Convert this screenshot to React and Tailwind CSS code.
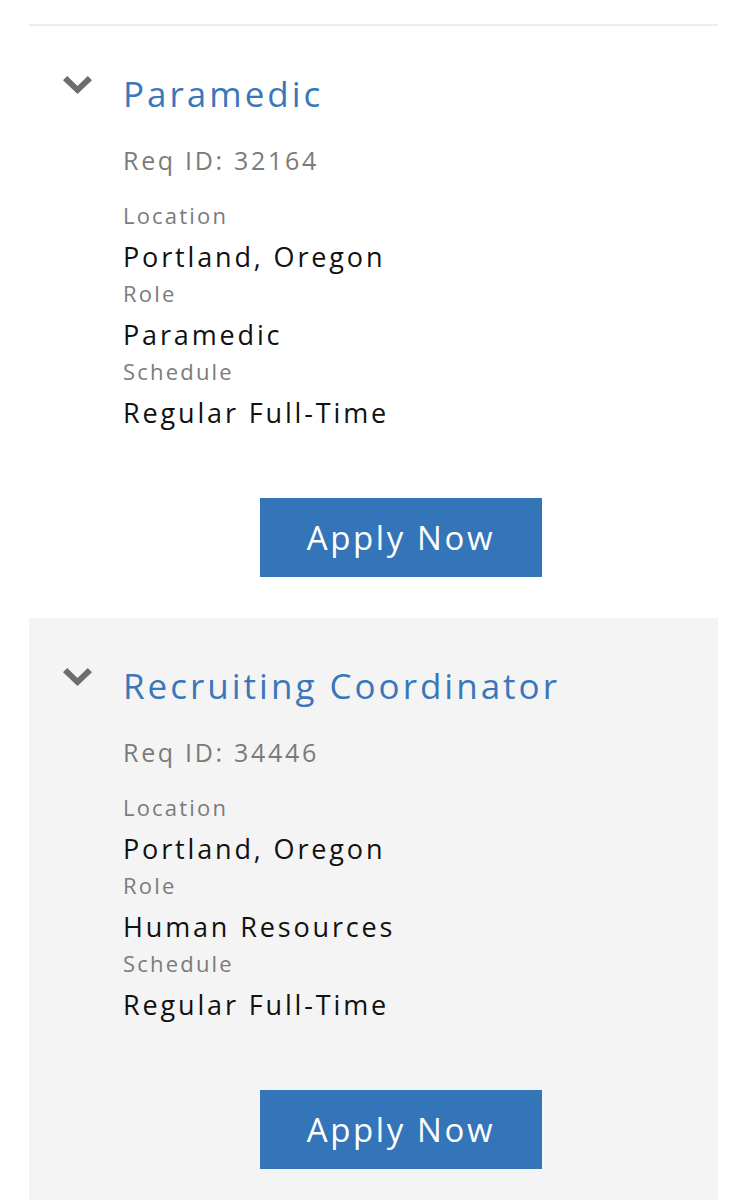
import React from "react";

const font = { fontFamily: '"Open Sans", "Liberation Sans", sans-serif' };

function Chevron() {
  return (
    <svg width="29" height="18" viewBox="0 0 29 18" className="block">
      <polygon points="0,4.2 4.2,0 14.5,10 24.8,0 29,4.2 14.5,18" fill="#6d6d6d" />
    </svg>
  );
}

function Field({ label, value }) {
  return (
    <>
      <div className="text-[22px] leading-[32px] tracking-[2.2px] text-[#7b7b7b]">{label}</div>
      <div className="mt-[6px] text-[27px] leading-[40px] tracking-[2.85px] text-[#111111]">{value}</div>
    </>
  );
}

function Job({ title, req, location, role, schedule, bg }) {
  return (
    <div className={`flex ${bg} pt-[46px] pb-[41px]`}>
      <div className="w-[94px] shrink-0 pl-[34px] pt-[4px]">
        <Chevron />
      </div>
      <div className="flex-1 pr-[39px]">
        <div className="text-[35px] leading-[44px] tracking-[3px] text-[#3a77ba]">{title}</div>
        <div className="mt-[27px] text-[25px] leading-[34px] tracking-[2.7px] text-[#7b7b7b]">Req ID: {req}</div>
        <div className="mt-[22px]">
          <Field label="Location" value={location} />
          <Field label="Role" value={role} />
          <Field label="Schedule" value={schedule} />
        </div>
        <div className="mt-[65px] flex justify-center">
          <button className="w-[282px] h-[79px] bg-[#3474b8] text-white text-[33px] tracking-[2.6px] flex items-center justify-center">
            Apply Now
          </button>
        </div>
      </div>
    </div>
  );
}

export default function App() {
  return (
    <div className="w-[747px] h-[1200px] overflow-hidden bg-white" style={font}>
      <div className="px-[29px] pt-[24px]">
        <div className="h-[2px] bg-[#ececec]" />
        <Job
          title="Paramedic"
          req="32164"
          location="Portland, Oregon"
          role="Paramedic"
          schedule="Regular Full-Time"
          bg="bg-white"
        />
        <Job
          title="Recruiting Coordinator"
          req="34446"
          location="Portland, Oregon"
          role="Human Resources"
          schedule="Regular Full-Time"
          bg="bg-[#f4f4f4]"
        />
      </div>
    </div>
  );
}
